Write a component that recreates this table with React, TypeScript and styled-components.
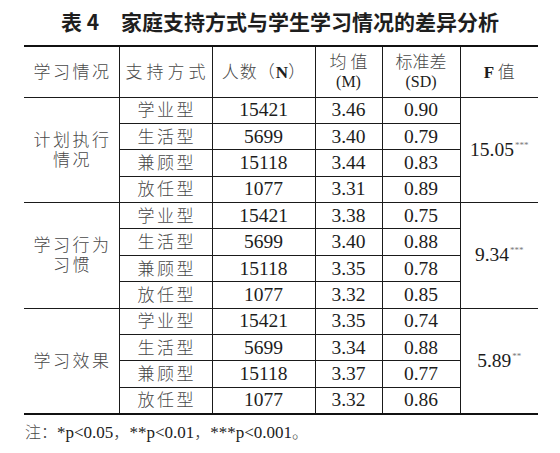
import React from "react";
import styled, { createGlobalStyle } from "styled-components";

const GlobalStyle = createGlobalStyle`
  html, body { margin: 0; padding: 0; background: #fff; }
  body { width: 560px; height: 453px; overflow: hidden; }
`;

const CN = `"Noto Sans CJK SC", "Noto Sans", sans-serif`;
const SERIF = `"Liberation Serif", "Noto Sans CJK SC", serif`;

const Page = styled.div`
  width: 560px;
  height: 453px;
  box-sizing: border-box;
  padding-top: 9px;
  background: #fff;
`;

const Title = styled.h1`
  margin: 0;
  text-align: center;
  font-family: ${CN};
  font-size: 21px;
  font-weight: 700;
  line-height: 24px;
  color: #1e1e1e;
`;

const TitleNo = styled.span`
  margin-right: 22px;
`;

const Table = styled.table`
  margin: 12px 0 0 24px;
  width: 514px;
  border-collapse: collapse;
  table-layout: fixed;
  border-top: 2px solid #111;
  border-bottom: 2px solid #111;
`;

const Col = styled.col<{ $w: number }>`
  width: ${(p) => p.$w}px;
`;

const HeadRow = styled.tr`
  height: 51px;
`;

const BodyRow = styled.tr`
  height: 26.4px;
`;

const HeadCell = styled.th<{ $edge?: boolean }>`
  padding: 0;
  font-weight: normal;
  text-align: center;
  vertical-align: middle;
  border-left: ${(p) => (p.$edge ? "none" : "1px solid #1a1a1a")};
  border-bottom: 1px solid #1a1a1a;
  line-height: 19px;
`;

const Cell = styled.td<{ $edge?: boolean }>`
  padding: 0;
  text-align: center;
  vertical-align: middle;
  border-left: ${(p) => (p.$edge ? "none" : "1px solid #1a1a1a")};
  border-top: 1px solid #1a1a1a;
  font-family: ${SERIF};
  font-size: 19.5px;
  line-height: 22px;
  color: #1c1c1c;
`;

const CnText = styled.span<{ $ls?: number; $lh?: number }>`
  display: inline-block;
  font-family: ${CN};
  font-weight: 300;
  font-size: 17px;
  line-height: ${(p) => p.$lh ?? 18}px;
  color: #484848;
  letter-spacing: ${(p) => p.$ls ?? 2.5}px;
  padding-left: ${(p) => p.$ls ?? 2.5}px;
`;

const Latin = styled.span<{ $bold?: boolean; $size?: number }>`
  font-family: ${SERIF};
  font-weight: ${(p) => (p.$bold ? 700 : 400)};
  font-size: ${(p) => p.$size ?? 17}px;
  color: #1c1c1c;
  letter-spacing: 0;
`;

const Stack = styled.span`
  display: inline-flex;
  flex-direction: column;
  align-items: center;
  gap: 2px;
`;

const Sig = styled.sup`
  font-size: 9px;
  line-height: 0;
  color: #777;
  vertical-align: 8px;
  margin-left: 1px;
`;

const Footnote = styled.p`
  margin: 5px 0 0 25px;
  font-family: ${SERIF};
  font-size: 17px;
  line-height: 22px;
  color: #222;
`;

const NoteCn = styled.span`
  font-family: ${CN};
  font-weight: 300;
  font-size: 16px;
  color: #484848;
`;

type Row = { type: string; n: string; m: string; sd: string };
type Group = { label: React.ReactNode; f: string; sig: string; rows: Row[] };

const groups: Group[] = [
  {
    label: (
      <>
        计划执行
        <br />
        情况
      </>
    ),
    f: "15.05",
    sig: "***",
    rows: [
      { type: "学业型", n: "15421", m: "3.46", sd: "0.90" },
      { type: "生活型", n: "5699", m: "3.40", sd: "0.79" },
      { type: "兼顾型", n: "15118", m: "3.44", sd: "0.83" },
      { type: "放任型", n: "1077", m: "3.31", sd: "0.89" },
    ],
  },
  {
    label: (
      <>
        学习行为
        <br />
        习惯
      </>
    ),
    f: "9.34",
    sig: "***",
    rows: [
      { type: "学业型", n: "15421", m: "3.38", sd: "0.75" },
      { type: "生活型", n: "5699", m: "3.40", sd: "0.88" },
      { type: "兼顾型", n: "15118", m: "3.35", sd: "0.78" },
      { type: "放任型", n: "1077", m: "3.32", sd: "0.85" },
    ],
  },
  {
    label: <>学习效果</>,
    f: "5.89",
    sig: "**",
    rows: [
      { type: "学业型", n: "15421", m: "3.35", sd: "0.74" },
      { type: "生活型", n: "5699", m: "3.34", sd: "0.88" },
      { type: "兼顾型", n: "15118", m: "3.37", sd: "0.77" },
      { type: "放任型", n: "1077", m: "3.32", sd: "0.86" },
    ],
  },
];

export default function App() {
  return (
    <Page>
      <GlobalStyle />
      <Title>
        <TitleNo>表 4</TitleNo>家庭支持方式与学生学习情况的差异分析
      </Title>
      <Table>
        <colgroup>
          <Col $w={95} />
          <Col $w={93} />
          <Col $w={103} />
          <Col $w={67} />
          <Col $w={78} />
          <Col $w={78} />
        </colgroup>
        <thead>
          <HeadRow>
            <HeadCell $edge>
              <CnText>学习情况</CnText>
            </HeadCell>
            <HeadCell>
              <CnText $ls={4}>支持方式</CnText>
            </HeadCell>
            <HeadCell>
              <CnText $ls={1}>
                人数（<Latin $bold>N</Latin>）
              </CnText>
            </HeadCell>
            <HeadCell>
              <Stack>
                <CnText $ls={4}>均值</CnText>
                <Latin $size={16}>(M)</Latin>
              </Stack>
            </HeadCell>
            <HeadCell>
              <Stack>
                <CnText $ls={0}>标准差</CnText>
                <Latin $size={16}>(SD)</Latin>
              </Stack>
            </HeadCell>
            <HeadCell>
              <CnText $ls={0}>
                <Latin $bold>F</Latin> 值
              </CnText>
            </HeadCell>
          </HeadRow>
        </thead>
        <tbody>
          {groups.map((g, gi) =>
            g.rows.map((r, ri) => (
              <BodyRow key={`${gi}-${ri}`}>
                {ri === 0 && (
                  <Cell $edge rowSpan={g.rows.length}>
                    <CnText $lh={20}>{g.label}</CnText>
                  </Cell>
                )}
                <Cell>
                  <CnText>{r.type}</CnText>
                </Cell>
                <Cell>{r.n}</Cell>
                <Cell>{r.m}</Cell>
                <Cell>{r.sd}</Cell>
                {ri === 0 && (
                  <Cell rowSpan={g.rows.length}>
                    {g.f}
                    <Sig>{g.sig}</Sig>
                  </Cell>
                )}
              </BodyRow>
            ))
          )}
        </tbody>
      </Table>
      <Footnote>
        <NoteCn>注：</NoteCn>*p&lt;0.05<NoteCn>，</NoteCn>**p&lt;0.01<NoteCn>，</NoteCn>***p&lt;0.001<NoteCn>。</NoteCn>
      </Footnote>
    </Page>
  );
}
